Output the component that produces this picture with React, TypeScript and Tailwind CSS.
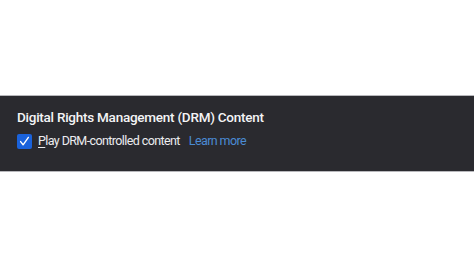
import React from "react";

export default function App() {
  return (
    <div className="w-[474px] h-[266px] bg-white flex flex-col" style={{ fontFamily: 'Roboto, "Noto Sans", sans-serif' }}>
      <div className="h-[95px]" />
      <div className="h-[77px] bg-[#2a2a2f] border-t border-b border-[#b8b8bc] pl-[17px] pt-[12px]">
        <h2 className="text-[13.5px] leading-[18px] font-medium text-[#f4f4f6] tracking-[-0.25px]">
          Digital Rights Management (DRM) Content
        </h2>
        <div className="flex items-center mt-[7px] h-[16px]">
          <span className="w-[15px] h-[15px] rounded-[2px] bg-[#1a62db] flex items-center justify-center">
            <svg width="15" height="15" viewBox="0 0 15 15" fill="none">
              <path d="M3.6 7.6 L6.1 10.8 L11.4 3.4" stroke="white" strokeWidth="1.4" strokeLinecap="round" strokeLinejoin="round" />
            </svg>
          </span>
          <span className="ml-[6px] text-[12.5px] text-[#ececef] tracking-[-0.6px]">
            <span className="underline underline-offset-2">P</span>lay DRM-controlled content
          </span>
          <a className="ml-[9px] text-[12.5px] text-[#4b8bd4] tracking-[-0.6px]">Learn more</a>
        </div>
      </div>
    </div>
  );
}
